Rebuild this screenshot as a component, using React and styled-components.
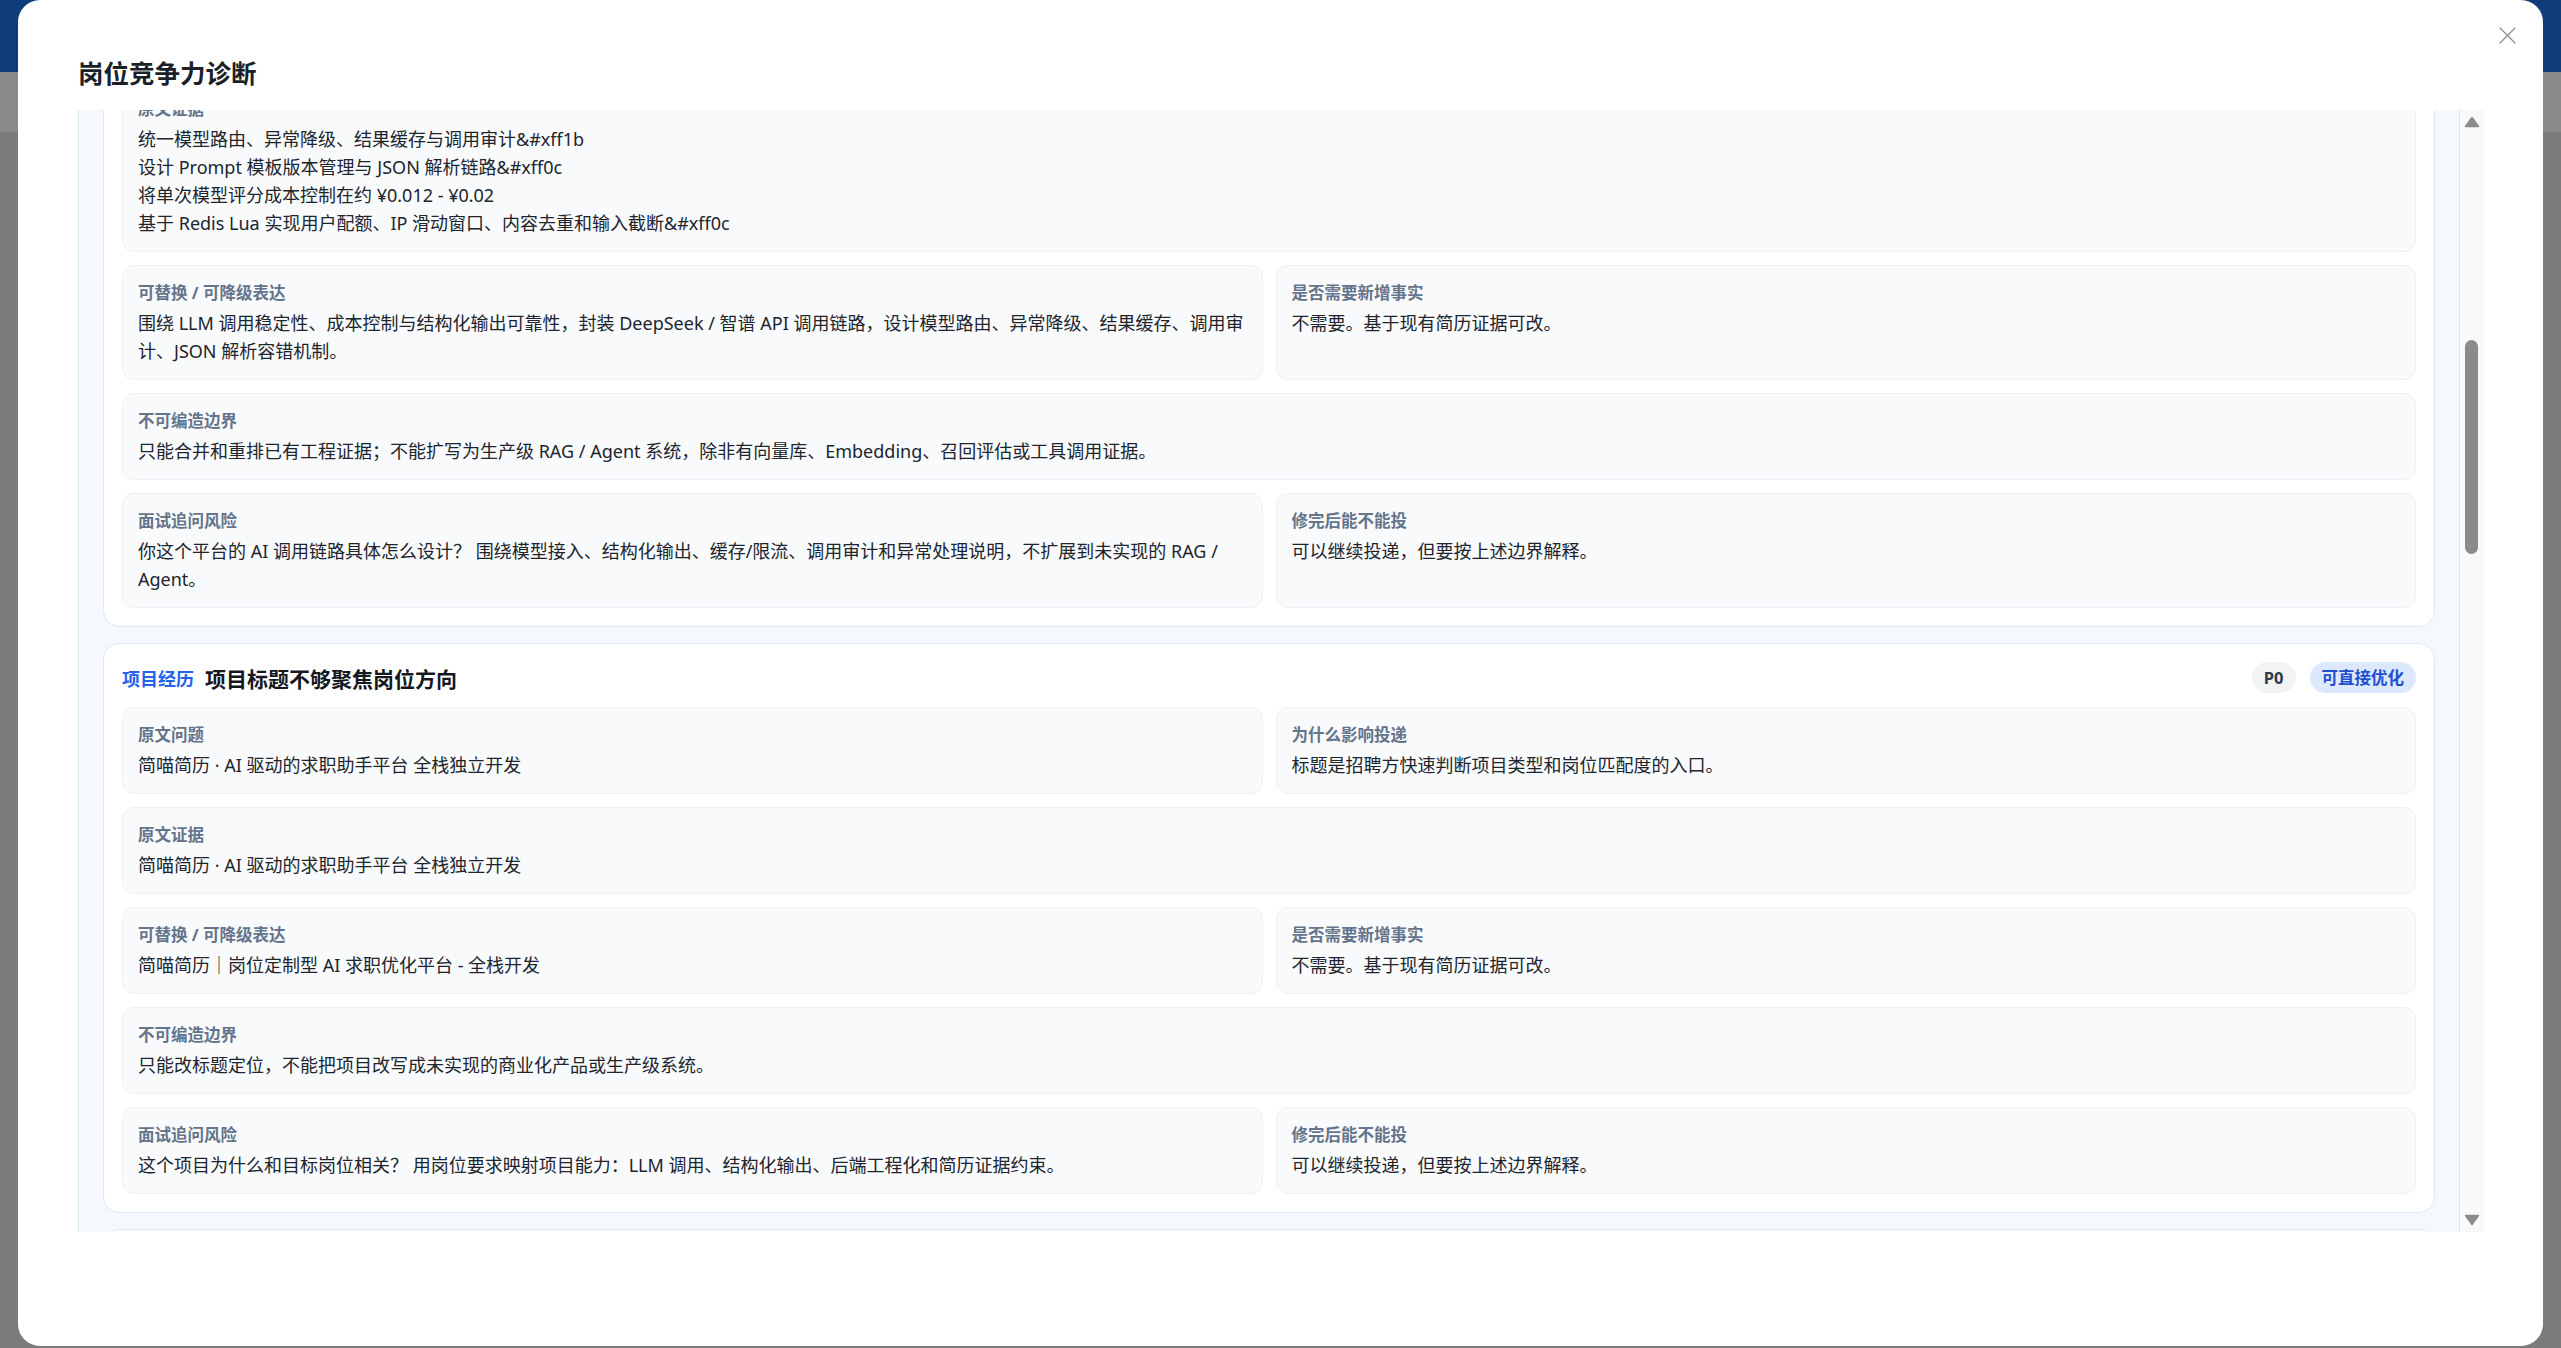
import React, { useLayoutEffect, useRef, useState } from "react";
import styled, { createGlobalStyle } from "styled-components";

const FONT = `"Noto Sans", "Noto Sans CJK SC", sans-serif`;

const issues = [
  {
    category: "工作经历",
    title: "实习经历缺少可量化结果",
    priority: "P1",
    status: "需补充证据",
    tone: "orange",
    problem: "参与公司内部管理系统的前后端开发，负责部分接口与页面实现。",
    reason:
      "缺少业务规模、性能指标或交付结果，招聘方难以判断贡献度；同时没有说明个人在团队中的分工边界，容易被理解为只做了零散需求，无法和岗位要求的独立交付能力对应起来。",
    evidence: [
      "参与公司内部管理系统的前后端开发",
      "负责部分接口与页面实现",
      "使用 Spring Boot 编写审批流相关接口",
      "使用 Vue 完成权限配置与列表页面",
      "参与接口联调与缺陷修复",
      "配合测试完成功能上线",
      "编写部分接口文档",
      "参与每周迭代评审",
    ],
    rewrite:
      "参与内部管理系统前后端开发，独立负责审批流与权限模块的接口设计和页面实现，配合测试完成 3 个版本迭代上线；整理接口文档与联调记录，减少前后端沟通返工，并在上线前完成权限配置的回归验证。",
    needFacts: "需要。版本数量、模块范围需与实际经历核对后再写入。",
    boundary:
      "不能编造用户量、性能提升百分比等无法证明的数据；没有数据时只写职责范围与交付节点，也不能把团队整体成果写成个人独立完成，更不能补写未参与过的架构设计或技术选型工作。",
    risk: "你在这个系统里具体负责哪些模块？ 说明接口设计、权限控制与联调过程，结合一次具体的缺陷排查经历说明协作方式，避免夸大为系统负责人或核心架构设计者。",
    canApply: "补充事实后可以投递。",
  },
  {
    category: "项目经历",
    title: "AI 能力描述偏泛，缺少工程落地细节",
    priority: "P0",
    status: "可直接优化",
    tone: "blue",
    problem: "负责 AI 模块开发，接入大模型接口实现简历评分与优化建议生成。",
    reason: "只写“接入大模型”无法体现调用稳定性、成本控制和结构化输出等工程能力。",
    evidence: [
      "统一模型路由、异常降级、结果缓存与调用审计&#xff1b",
      "设计 Prompt 模板版本管理与 JSON 解析链路&#xff0c",
      "将单次模型评分成本控制在约 ¥0.012 - ¥0.02",
      "基于 Redis Lua 实现用户配额、IP 滑动窗口、内容去重和输入截断&#xff0c",
    ],
    rewrite:
      "围绕 LLM 调用稳定性、成本控制与结构化输出可靠性，封装 DeepSeek / 智谱 API 调用链路，设计模型路由、异常降级、结果缓存、调用审计、JSON 解析容错机制。",
    needFacts: "不需要。基于现有简历证据可改。",
    boundary:
      "只能合并和重排已有工程证据；不能扩写为生产级 RAG / Agent 系统，除非有向量库、Embedding、召回评估或工具调用证据。",
    risk: "你这个平台的 AI 调用链路具体怎么设计？ 围绕模型接入、结构化输出、缓存/限流、调用审计和异常处理说明，不扩展到未实现的 RAG / Agent。",
    canApply: "可以继续投递，但要按上述边界解释。",
  },
  {
    category: "项目经历",
    title: "项目标题不够聚焦岗位方向",
    priority: "P0",
    status: "可直接优化",
    tone: "blue",
    problem: "简喵简历 · AI 驱动的求职助手平台 全栈独立开发",
    reason: "标题是招聘方快速判断项目类型和岗位匹配度的入口。",
    evidence: ["简喵简历 · AI 驱动的求职助手平台 全栈独立开发"],
    rewrite: "简喵简历｜岗位定制型 AI 求职优化平台 - 全栈开发",
    needFacts: "不需要。基于现有简历证据可改。",
    boundary: "只能改标题定位，不能把项目改写成未实现的商业化产品或生产级系统。",
    risk: "这个项目为什么和目标岗位相关？ 用岗位要求映射项目能力：LLM 调用、结构化输出、后端工程化和简历证据约束。",
    canApply: "可以继续投递，但要按上述边界解释。",
  },
  {
    category: "专业技能",
    title: "技能清单与岗位关键词对应不足",
    priority: "P1",
    status: "可直接优化",
    tone: "blue",
    problem: "熟悉 Java、Python、MySQL、Redis、Vue、React 等技术。",
    reason: "技能罗列没有分层，岗位要求的后端与 AI 应用能力不够突出。",
    evidence: [
      "熟悉 Java、Python、MySQL、Redis、Vue、React 等技术",
      "了解大模型 API 调用与 Prompt 设计",
      "熟悉 Git 协作与 Linux 常用命令",
      "了解 Docker 容器化部署",
    ],
    rewrite:
      "后端：Java / Spring Boot、MySQL、Redis（Lua 限流、缓存）；AI 应用：LLM API 调用、Prompt 模板管理、结构化输出解析；前端：Vue / React。",
    needFacts: "不需要。基于现有简历证据可改。",
    boundary: "只能按已有项目中用到的技术分组；不能新增未使用过的框架或中间件。",
    risk: "Redis 在项目里具体解决了什么问题？ 结合限流、去重和缓存场景说明，不扩展到未实现的集群方案。",
    canApply: "可以继续投递，但要按上述边界解释。",
  },
  {
    category: "项目经历",
    title: "后端工程能力缺少稳定性证据",
    priority: "P1",
    status: "需补充证据",
    tone: "orange",
    problem: "使用 Spring Boot 开发后端服务，实现用户、简历与订单模块。",
    reason: "只有功能描述，缺少并发、稳定性或异常处理方面的工程证据。",
    evidence: [
      "使用 Spring Boot 开发后端服务",
      "实现用户、简历与订单模块",
      "接入支付回调与消息通知",
      "使用 MyBatis-Plus 完成数据访问层",
      "编写核心接口的单元测试",
    ],
    rewrite:
      "基于 Spring Boot 搭建后端服务，完成用户、简历、订单模块设计；处理支付回调幂等与消息通知重试，保证关键链路数据一致。",
    needFacts: "需要。幂等与重试机制需确认在代码中已实现。",
    boundary: "不能写成高并发或分布式系统；没有压测数据时不写 QPS 与响应时间。",
    risk: "支付回调重复通知怎么处理？ 说明幂等校验与状态机设计，不扩展到未实现的分布式事务。",
    canApply: "补充事实后可以投递。",
  },
  {
    category: "教育背景",
    title: "相关课程与岗位方向未体现",
    priority: "P2",
    status: "可直接优化",
    tone: "blue",
    problem: "计算机科学与技术 本科",
    reason: "教育信息过于简略，无法补充说明基础能力。",
    evidence: [
      "计算机科学与技术 本科",
      "主修课程：数据结构、操作系统、计算机网络、数据库原理",
      "毕业设计：基于大模型的简历分析系统",
      "校级奖学金",
    ],
    rewrite: "计算机科学与技术 本科｜相关课程：数据结构、操作系统、计算机网络、数据库原理",
    needFacts: "不需要。基于现有简历证据可改。",
    boundary: "只能列出已修读课程；不能补写未获得的奖项或排名。",
    risk: "数据库原理里的索引与事务你怎么理解？ 结合项目中 MySQL 的使用场景回答。",
    canApply: "可以继续投递。",
  },
  {
    category: "个人总结",
    title: "求职意向与目标岗位表述不一致",
    priority: "P2",
    status: "可直接优化",
    tone: "blue",
    problem: "希望从事全栈开发相关工作，对前端和后端都有兴趣。",
    reason: "目标岗位偏后端与 AI 应用，求职意向表述过于宽泛。",
    evidence: [
      "希望从事全栈开发相关工作",
      "对前端和后端都有兴趣",
      "学习能力强，能快速上手新技术",
      "有良好的沟通能力与团队合作精神",
    ],
    rewrite: "关注后端工程与 AI 应用落地，具备 LLM 调用链路、缓存限流与结构化输出的完整项目实践。",
    needFacts: "不需要。基于现有简历证据可改。",
    boundary: "只能概括已有项目能力；不能写成多年经验或资深工程师定位。",
    risk: "为什么选择后端与 AI 应用方向？ 结合项目经历说明兴趣来源与实践积累。",
    canApply: "可以继续投递。",
  },
  {
    category: "格式排版",
    title: "核心项目位置靠后",
    priority: "P2",
    status: "可直接优化",
    tone: "blue",
    problem: "项目经历位于第二页，首屏主要为教育与校园活动。",
    reason: "招聘方通常只快速浏览首屏，核心项目靠后会降低匹配判断效率。",
    evidence: [
      "第一页：教育背景、校园活动、获奖情况",
      "第二页：项目经历、专业技能",
      "第二页底部：自我评价",
      "校园活动共 5 条，占用约半页篇幅",
      "项目经历起始于第二页第 3 行",
    ],
    rewrite: "调整顺序为：个人信息 → 专业技能 → 项目经历 → 工作经历 → 教育背景，校园活动精简为一行。",
    needFacts: "不需要。基于现有简历证据可改。",
    boundary: "只调整模块顺序与篇幅；不能为填满版面新增经历。",
    risk: "校园活动里有没有和岗位相关的内容？ 如有技术分享或竞赛经历可简要说明。",
    canApply: "可以继续投递。",
  },
];

// card index that sits near the top of the visible area
const ANCHOR = 2;
const ANCHOR_OFFSET = 533;

const GlobalStyle = createGlobalStyle`
  html, body {
    margin: 0;
    padding: 0;
    overflow: hidden;
    font-family: ${FONT};
  }
  * {
    box-sizing: border-box;
  }
`;

const Page = styled.div`
  min-height: 100vh;
  display: flex;
  flex-direction: column;
  background: #e4e4e4;
`;

const TopBar = styled.div`
  height: 72px;
  background: #1c71e2;
`;

const SubBar = styled.div`
  height: 60px;
  background: #ffffff;
`;

const Overlay = styled.div`
  position: fixed;
  inset: 0;
  background: rgba(0, 0, 0, 0.46);
  display: flex;
  justify-content: center;
  align-items: flex-start;
`;

const Modal = styled.div`
  position: relative;
  width: calc(100% - 36px);
  height: calc(100vh - 2px);
  background: #ffffff;
  border-radius: 22px;
  display: flex;
  flex-direction: column;
  padding: 0 59px 114px 60px;
`;

const ModalHeader = styled.div`
  padding: 56px 0 19px;
`;

const ModalTitle = styled.h2`
  margin: 0;
  font-size: 25.5px;
  line-height: 35px;
  font-weight: 700;
  color: #1b1f27;
`;

const CloseButton = styled.button`
  position: absolute;
  top: 26px;
  right: 26px;
  width: 19px;
  height: 19px;
  padding: 0;
  border: 0;
  background: transparent;
  cursor: pointer;
  display: flex;
  align-items: center;
  justify-content: center;
`;

const BodyRow = styled.div`
  flex: 1;
  min-height: 0;
  display: flex;
`;

const Scroller = styled.div`
  flex: 1;
  min-width: 0;
  overflow-y: auto;
  scrollbar-width: none;
  &::-webkit-scrollbar {
    display: none;
  }
`;

const ScrollRail = styled.div`
  width: 24px;
  flex-shrink: 0;
  background: #f9f9f9;
  display: flex;
  flex-direction: column;
`;

const RailButton = styled.div`
  height: 24px;
  flex-shrink: 0;
  display: flex;
  align-items: center;
  justify-content: center;
`;

const ThumbTrack = styled.div`
  flex: 1;
  min-height: 0;
  padding: 0 6px 0 5px;
`;

const Thumb = styled.div`
  width: 13px;
  border-radius: 7px;
  background: #8b8b8b;
`;

const Panel = styled.div`
  border: 1px solid #dce7f6;
  background: #f5f9fe;
  border-radius: 16px;
  padding: 24px;
  display: flex;
  flex-direction: column;
  gap: 16px;
`;

const Card = styled.div`
  background: #ffffff;
  border: 1px solid #dfe8f4;
  border-radius: 16px;
  padding: 18px;
`;

const CardHeader = styled.div`
  display: flex;
  align-items: center;
  height: 31px;
  margin-bottom: 14px;
`;

const Category = styled.span`
  font-size: 18px;
  font-weight: 700;
  color: #2563eb;
  margin-right: 11px;
`;

const IssueTitle = styled.span`
  font-size: 21px;
  font-weight: 700;
  color: #15181e;
`;

const Badges = styled.div`
  margin-left: auto;
  display: flex;
  gap: 14px;
`;

const badgeTones = {
  gray: { bg: "#f1f3f5", fg: "#2f3a4a" },
  blue: { bg: "#dce9fd", fg: "#1e4fd1" },
  orange: { bg: "#fdeedb", fg: "#b45a09" },
};

const Badge = styled.span`
  height: 31px;
  line-height: 31px;
  padding: 0 12px;
  border-radius: 16px;
  font-size: 16.5px;
  font-weight: 700;
  background: ${(p) => badgeTones[p.$tone].bg};
  color: ${(p) => badgeTones[p.$tone].fg};
`;

const Fields = styled.div`
  display: grid;
  grid-template-columns: 1fr 1fr;
  gap: 13px;
`;

const Field = styled.div`
  grid-column: ${(p) => (p.$wide ? "1 / -1" : "auto")};
  background: #f8fafc;
  border: 1px solid #edf1f6;
  border-radius: 12px;
  padding: 16px 15px 14px;
`;

const FieldLabel = styled.div`
  font-size: 16.5px;
  line-height: 22px;
  font-weight: 700;
  color: #64748b;
  margin-bottom: 5px;
`;

const FieldValue = styled.div`
  font-size: 18px;
  line-height: 28px;
  color: #20252d;
  white-space: pre-line;
`;

const CloseIcon = () => (
  <svg width="17" height="17" viewBox="0 0 17 17" fill="none">
    <path d="M1 1L16 16M16 1L1 16" stroke="#8e8e8e" strokeWidth="1.3" strokeLinecap="round" />
  </svg>
);

const ArrowIcon = ({ down }) => (
  <svg width="16" height="12" viewBox="0 0 16 12">
    <polygon
      points={down ? "1.5,1.5 14.5,1.5 8,10.5" : "1.5,10.5 14.5,10.5 8,1.5"}
      fill="#8b8b8b"
      stroke="#8b8b8b"
      strokeWidth="1.5"
      strokeLinejoin="round"
    />
  </svg>
);

const InfoField = ({ label, value, wide }) => (
  <Field $wide={wide}>
    <FieldLabel>{label}</FieldLabel>
    <FieldValue>{value}</FieldValue>
  </Field>
);

const IssueCard = ({ issue, cardRef }) => (
  <Card ref={cardRef}>
    <CardHeader>
      <Category>{issue.category}</Category>
      <IssueTitle>{issue.title}</IssueTitle>
      <Badges>
        <Badge $tone="gray">{issue.priority}</Badge>
        <Badge $tone={issue.tone}>{issue.status}</Badge>
      </Badges>
    </CardHeader>
    <Fields>
      <InfoField label="原文问题" value={issue.problem} />
      <InfoField label="为什么影响投递" value={issue.reason} />
      <InfoField label="原文证据" value={issue.evidence.join("\n")} wide />
      <InfoField label="可替换 / 可降级表达" value={issue.rewrite} />
      <InfoField label="是否需要新增事实" value={issue.needFacts} />
      <InfoField label="不可编造边界" value={issue.boundary} wide />
      <InfoField label="面试追问风险" value={issue.risk} />
      <InfoField label="修完后能不能投" value={issue.canApply} />
    </Fields>
  </Card>
);

const App = () => {
  const scrollRef = useRef(null);
  const anchorRef = useRef(null);
  const trackRef = useRef(null);
  const [thumb, setThumb] = useState({ top: 0, height: 0 });

  const syncThumb = () => {
    const scroller = scrollRef.current;
    const track = trackRef.current;
    if (!scroller || !track) return;
    const { scrollTop, scrollHeight, clientHeight } = scroller;
    const trackLen = track.clientHeight;
    const height = Math.max(24, (trackLen * clientHeight) / scrollHeight);
    const range = scrollHeight - clientHeight;
    const top = range > 0 ? ((trackLen - height) * scrollTop) / range : 0;
    setThumb({ top, height });
  };

  useLayoutEffect(() => {
    const scroller = scrollRef.current;
    const anchor = anchorRef.current;
    if (!scroller || !anchor) return;
    const delta = anchor.getBoundingClientRect().top - scroller.getBoundingClientRect().top;
    scroller.scrollTop += delta - ANCHOR_OFFSET;
    syncThumb();
  }, []);

  return (
    <>
      <GlobalStyle />
      <Page>
        <TopBar />
        <SubBar />
      </Page>
      <Overlay>
        <Modal>
          <CloseButton aria-label="关闭">
            <CloseIcon />
          </CloseButton>
          <ModalHeader>
            <ModalTitle>岗位竞争力诊断</ModalTitle>
          </ModalHeader>
          <BodyRow>
            <Scroller ref={scrollRef} onScroll={syncThumb}>
              <Panel>
                {issues.map((issue, i) => (
                  <IssueCard key={i} issue={issue} cardRef={i === ANCHOR ? anchorRef : undefined} />
                ))}
              </Panel>
            </Scroller>
            <ScrollRail>
              <RailButton>
                <ArrowIcon />
              </RailButton>
              <ThumbTrack ref={trackRef}>
                <Thumb style={{ marginTop: thumb.top, height: thumb.height }} />
              </ThumbTrack>
              <RailButton>
                <ArrowIcon down />
              </RailButton>
            </ScrollRail>
          </BodyRow>
        </Modal>
      </Overlay>
    </>
  );
};

export default App;
